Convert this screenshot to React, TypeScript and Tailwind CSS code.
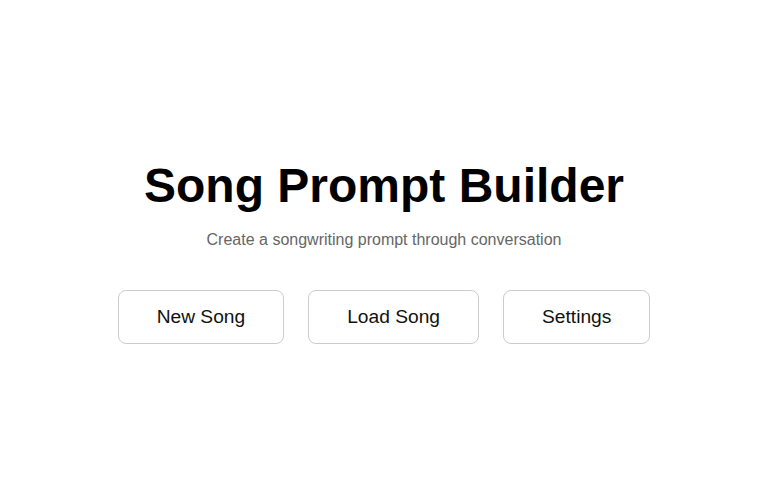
export default function App() {
  const buttons = ['New Song', 'Load Song', 'Settings'];

  return (
    <div
      className="min-h-screen flex flex-col items-center justify-center pt-[21px] bg-white text-black"
      style={{ fontFamily: '"Liberation Sans", Arial, sans-serif' }}
    >
      <h1 className="text-[48px] leading-[55px] font-bold mb-[18px]">Song Prompt Builder</h1>
      <p className="text-[16px] leading-[18px] text-[#666] mb-[41px]">
        Create a songwriting prompt through conversation
      </p>
      <div className="flex gap-[24px]">
        {buttons.map((label) => (
          <button
            key={label}
            className="px-[38px] py-[15px] text-[19.2px] leading-[22px] border border-[#ccc] rounded-lg bg-white text-[#111] hover:bg-gray-50"
          >
            {label}
          </button>
        ))}
      </div>
    </div>
  );
}
